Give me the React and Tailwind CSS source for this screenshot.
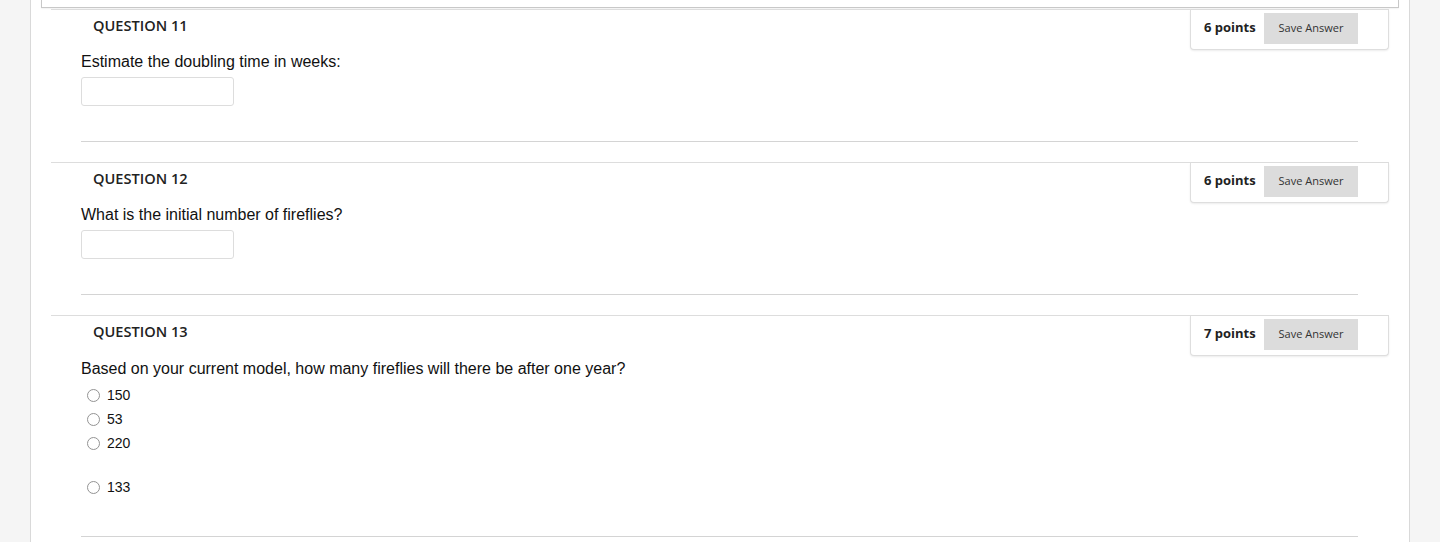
import React from 'react';

const Points = ({ value }) => (
    <div className="flex items-center h-[40px] w-[199px] pl-[13px] pr-[30px] justify-between border-x border-b border-[#dedede] rounded-b-[4px] shadow-[0_1px_2px_rgba(0,0,0,0.08)] bg-white">
        <span className="font-['Open_Sans',sans-serif] font-bold text-[13px] text-[#222] -mt-[3px]">{value} points</span>
        <button className="h-[31px] w-[94px] -mt-[2px] bg-[#dcdcdc] font-['Open_Sans',sans-serif] text-[11px] text-[#333]">
            Save Answer
        </button>
    </div>
);

const Header = ({ num, points }) => (
    <div className="flex items-start justify-between">
        <div className="pl-[42px] pt-[5px] leading-[20px] font-['Open_Sans',sans-serif] font-semibold text-[14.6px] text-[#222]">
            QUESTION {num}
        </div>
        <Points value={points} />
    </div>
);

const TextQuestion = ({ num, points, prompt }) => (
    <section className="mx-[20px] border-t border-[#dddddd]">
        <Header num={num} points={points} />
        <div className="px-[30px]">
            <p className="text-[16px] leading-[24px] text-[#111] font-['Liberation_Sans',Arial,sans-serif]">{prompt}</p>
            <input className="mt-[3px] h-[29px] w-[153px] border border-[#dddddd] rounded-[3px] bg-white block" />
        </div>
        <div className="mt-[35px] mb-[20px] ml-[30px] mr-[31px] border-t border-[#d4d4d4]" />
    </section>
);

const Option = ({ label, className = '' }) => (
    <label className={`flex items-center h-[24px] pl-[6px] gap-[7px] ${className}`}>
        <span className="w-[13px] h-[13px] rounded-full border border-[#939393] bg-white" />
        <span className="text-[14px] text-[#111] font-['Liberation_Sans',Arial,sans-serif]">{label}</span>
    </label>
);

const App = () => {
    return (
        <div className="h-[542px] overflow-hidden bg-[#f5f5f5] flex">
            <main className="ml-[30px] w-[1380px] h-full bg-white border-x border-[#d9d9d9]">
                {/* previous question box, cut off at top */}
                <div className="mx-[10px] h-[8px] border-x border-b border-[#c8c8c8] shadow-[0_1px_2px_rgba(0,0,0,0.06)]" />
                <div className="h-[1px]" />

                <TextQuestion num={11} points={6} prompt="Estimate the doubling time in weeks:" />
                <TextQuestion num={12} points={6} prompt="What is the initial number of fireflies?" />

                <section className="mx-[20px] border-t border-[#dddddd]">
                    <Header num={13} points={7} />
                    <div className="px-[30px]">
                        <p className="text-[16px] leading-[24px] text-[#111] font-['Liberation_Sans',Arial,sans-serif] mt-[1px]">
                            Based on your current model, how many fireflies will there be after one year?
                        </p>
                        <div className="mt-[2px] flex flex-col">
                            <Option label="150" />
                            <Option label="53" />
                            <Option label="220" />
                            <Option label="133" className="mt-[20px]" />
                        </div>
                    </div>
                    <div className="mt-[37px] ml-[30px] mr-[31px] border-t border-[#d4d4d4]" />
                </section>
            </main>
        </div>
    );
};

export default App;
